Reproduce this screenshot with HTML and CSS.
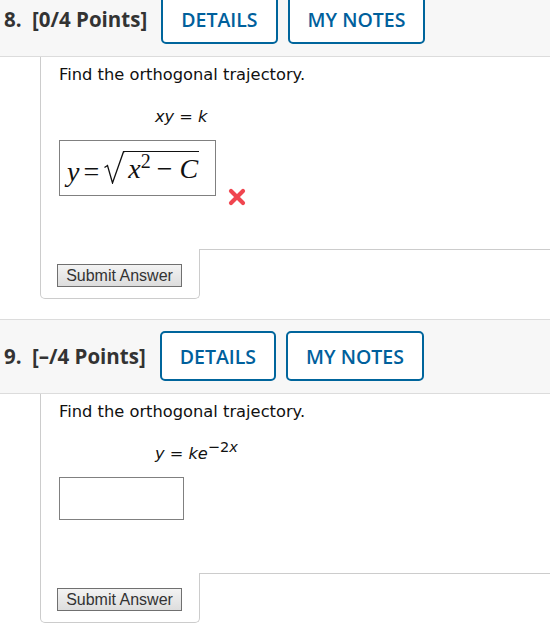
FILE: index.html
```html
<!DOCTYPE html>
<html>
<head>
<meta charset="utf-8">
<link rel="stylesheet" href="styles.css">
</head>
<body>
<div class="page">
  <section class="question">
    <div class="qhead">
      <span class="qnum">8.</span>
      <span class="qpts">[0/4 Points]</span>
      <button class="hbtn">DETAILS</button>
      <button class="hbtn">MY NOTES</button>
    </div>
    <div class="qbody">
      <div class="content">
        <p class="prompt">Find the orthogonal trajectory.</p>
        <p class="formula"><i>xy</i> = <i>k</i></p>
        <div class="answer-row">
          <div class="answer filled">
            <span class="math"><i class="v">y</i><span class="eq">=</span><svg class="radical" width="21" height="33" viewBox="0 0 21 33"><path d="M0.5 16.5 L3.5 14.5 L8.5 32 L19.5 0.7 L21 0.7" fill="none" stroke="#111" stroke-width="1.3"/></svg><span class="radicand"><i>x</i><sup>2</sup><span class="minus">−</span><i>C</i></span></span>
          </div>
          <svg class="wrong" width="18" height="18" viewBox="0 0 18 18"><path d="M3 3 L15 15 M15 3 L3 15" stroke="#f0454f" stroke-width="4.2" stroke-linecap="round"/></svg>
        </div>
      </div>
      <div class="footrow">
        <div class="submitcell"><button class="submit">Submit Answer</button></div>
        <div class="restcell"></div>
      </div>
    </div>
  </section>

  <section class="question">
    <div class="qhead">
      <span class="qnum">9.</span>
      <span class="qpts">[–/4 Points]</span>
      <button class="hbtn">DETAILS</button>
      <button class="hbtn">MY NOTES</button>
    </div>
    <div class="qbody">
      <div class="content">
        <p class="prompt">Find the orthogonal trajectory.</p>
        <p class="formula f2"><i>y</i> = <i>ke</i><sup>−2<i>x</i></sup></p>
        <div class="answer-row">
          <div class="answer empty"></div>
        </div>
      </div>
      <div class="footrow">
        <div class="submitcell"><button class="submit">Submit Answer</button></div>
        <div class="restcell"></div>
      </div>
    </div>
  </section>
</div>
</body>
</html>
```
FILE: styles.css
```css
html, body {
  margin: 0;
  padding: 0;
  background: #ffffff;
}
.page {
  margin-top: -18px;
}
.question {
  margin-bottom: 20px;
}
.qhead {
  display: flex;
  align-items: center;
  background: #f7f7f7;
  border-top: 1px solid #dcdcdc;
  border-bottom: 1px solid #dcdcdc;
  padding: 11px 0 12px 4px;
  font-family: "Open Sans", sans-serif;
}
.qnum {
  font-weight: 700;
  font-size: 20.5px;
  color: #333333;
  width: 28px;
}
.qpts {
  font-weight: 700;
  font-size: 20.5px;
  color: #333333;
  margin-right: 14px;
}
.hbtn {
  font-family: "Open Sans", sans-serif;
  font-weight: 600;
  font-size: 19.5px;
  color: #00609c;
  background: #ffffff;
  border: 2px solid #00659c;
  border-radius: 5px;
  height: 50px;
  padding: 0 18px;
  margin-right: 10px;
  cursor: pointer;
}
.qbody {
  margin-left: 40px;
}
.content {
  border-left: 1px solid #cccccc;
  padding: 9px 0 53px 18px;
  font-family: "DejaVu Sans", Verdana, sans-serif;
  color: #111111;
}
.prompt {
  margin: 0;
  font-size: 16.3px;
  line-height: 18px;
}
.formula {
  margin: 22px 0 0 96px;
  font-size: 16.2px;
  line-height: 22px;
}
.formula i {
  font-style: italic;
}
.f2 sup {
  font-size: 14.5px;
  vertical-align: 7px;
  line-height: 0;
}
.answer-row {
  display: flex;
  align-items: flex-start;
  margin-top: 12px;
}
.answer {
  box-sizing: border-box;
  border: 1px solid #808080;
  background: #ffffff;
}
.answer.filled {
  width: 157px;
  height: 56px;
  padding: 10px 0 0 7px;
}
.answer.empty {
  width: 125px;
  height: 43px;
}
.math {
  display: inline-flex;
  align-items: flex-start;
  font-family: "Liberation Serif", "Times New Roman", serif;
  font-size: 28px;
  line-height: 33px;
  color: #111111;
}
.math .v,
.math .eq {
  margin-top: 4px;
}
.math .eq {
  margin-left: 4px;
  margin-right: 5px;
}
.radical {
  display: block;
}
.radicand {
  border-top: 1.3px solid #111;
  padding: 0 1px 0 3px;
  line-height: 33px;
  white-space: nowrap;
}
.radicand sup {
  font-size: 20px;
  line-height: 0;
  vertical-align: 10px;
  font-style: normal;
}
.radicand .minus {
  margin: 0 7px 0 6px;
}
.wrong {
  margin: 48px 0 -10px 12px;
}
.footrow {
  display: flex;
}
.submitcell {
  box-sizing: border-box;
  width: 160px;
  border-left: 1px solid #cccccc;
  border-right: 1px solid #cccccc;
  border-bottom: 1px solid #cccccc;
  border-radius: 0 0 5px 5px;
  padding: 15px 0 11px 16px;
}
.restcell {
  flex: 1;
  border-top: 1px solid #cccccc;
}
.submit {
  display: block;
  box-sizing: border-box;
  width: 125px;
  height: 23px;
  padding: 0;
  font-family: "Liberation Sans", Arial, sans-serif;
  font-size: 16px;
  color: #333333;
  border: 1px solid #707070;
  border-radius: 0;
  background: linear-gradient(#f3f3f3, #dddddd);
  cursor: pointer;
}
```
